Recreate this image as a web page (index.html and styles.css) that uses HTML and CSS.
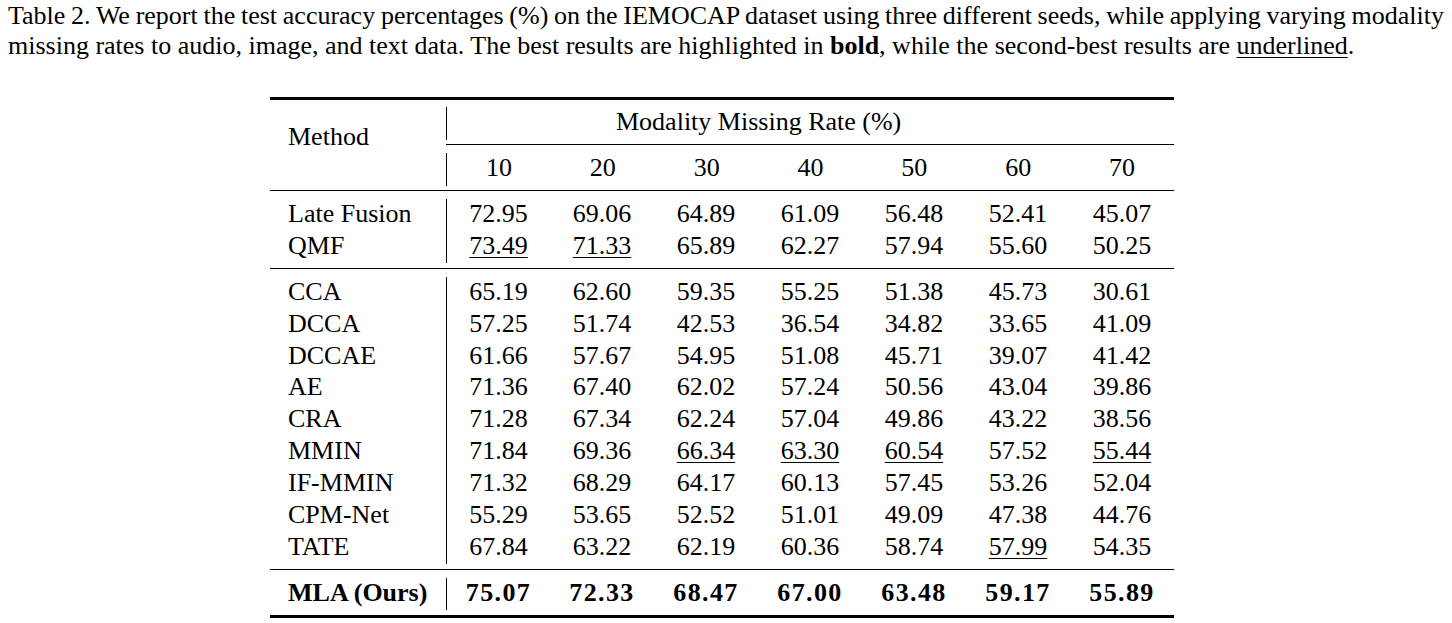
FILE: index.html
```html
<!DOCTYPE html>
<html lang="en">
<head>
<meta charset="utf-8">
<title>Table 2</title>
<link rel="stylesheet" href="styles.css">
</head>
<body>
<p class="caption"><span class="cap-line1">Table 2. We report the test accuracy percentages (%) on the IEMOCAP dataset using three different seeds, while applying varying modality</span><span class="cap-line2">missing rates to audio, image, and text data. The best results are highlighted in <b>bold</b>, while the second-best results are <u class="ul">underlined</u>.</span></p>

<div class="table">
  <div class="head">
    <div class="head-method">Method</div>
    <div class="head-right">
      <div class="span-row">Modality Missing Rate (%)</div>
      <div class="cmid"></div>
      <div class="rates">
        <span>10</span><span>20</span><span>30</span><span>40</span><span>50</span><span>60</span><span>70</span>
      </div>
    </div>
  </div>

  <div class="group">
    <span class="m">Late Fusion</span><span class="n c1">72.95</span><span class="n">69.06</span><span class="n">64.89</span><span class="n">61.09</span><span class="n">56.48</span><span class="n">52.41</span><span class="n">45.07</span>
    <span class="m">QMF</span><span class="n c1"><u class="ul">73.49</u></span><span class="n"><u class="ul">71.33</u></span><span class="n">65.89</span><span class="n">62.27</span><span class="n">57.94</span><span class="n">55.60</span><span class="n">50.25</span>
  </div>

  <div class="group">
    <span class="m">CCA</span><span class="n c1">65.19</span><span class="n">62.60</span><span class="n">59.35</span><span class="n">55.25</span><span class="n">51.38</span><span class="n">45.73</span><span class="n">30.61</span>
    <span class="m">DCCA</span><span class="n c1">57.25</span><span class="n">51.74</span><span class="n">42.53</span><span class="n">36.54</span><span class="n">34.82</span><span class="n">33.65</span><span class="n">41.09</span>
    <span class="m">DCCAE</span><span class="n c1">61.66</span><span class="n">57.67</span><span class="n">54.95</span><span class="n">51.08</span><span class="n">45.71</span><span class="n">39.07</span><span class="n">41.42</span>
    <span class="m">AE</span><span class="n c1">71.36</span><span class="n">67.40</span><span class="n">62.02</span><span class="n">57.24</span><span class="n">50.56</span><span class="n">43.04</span><span class="n">39.86</span>
    <span class="m">CRA</span><span class="n c1">71.28</span><span class="n">67.34</span><span class="n">62.24</span><span class="n">57.04</span><span class="n">49.86</span><span class="n">43.22</span><span class="n">38.56</span>
    <span class="m">MMIN</span><span class="n c1">71.84</span><span class="n">69.36</span><span class="n"><u class="ul">66.34</u></span><span class="n"><u class="ul">63.30</u></span><span class="n"><u class="ul">60.54</u></span><span class="n">57.52</span><span class="n"><u class="ul">55.44</u></span>
    <span class="m">IF-MMIN</span><span class="n c1">71.32</span><span class="n">68.29</span><span class="n">64.17</span><span class="n">60.13</span><span class="n">57.45</span><span class="n">53.26</span><span class="n">52.04</span>
    <span class="m">CPM-Net</span><span class="n c1">55.29</span><span class="n">53.65</span><span class="n">52.52</span><span class="n">51.01</span><span class="n">49.09</span><span class="n">47.38</span><span class="n">44.76</span>
    <span class="m">TATE</span><span class="n c1">67.84</span><span class="n">63.22</span><span class="n">62.19</span><span class="n">60.36</span><span class="n">58.74</span><span class="n"><u class="ul">57.99</u></span><span class="n">54.35</span>
  </div>

  <div class="group group-last best">
    <span class="m">MLA (Ours)</span><span class="n c1">75.07</span><span class="n">72.33</span><span class="n">68.47</span><span class="n">67.00</span><span class="n">63.48</span><span class="n">59.17</span><span class="n">55.89</span>
  </div>
</div>
</body>
</html>
```

FILE: styles.css
```css
body {
  margin: 0;
  background: #fff;
  color: #000;
  font-family: "Liberation Serif", "Times New Roman", serif;
}

.caption {
  margin: 1px 0 0 8px;
  width: 1436px;
  font-size: 26px;
  line-height: 30px;
}

.cap-line1 {
  display: block;
  word-spacing: -4px;
  text-align: justify;
  text-align-last: justify;
}

.cap-line2 {
  display: block;
}

.ul {
  text-decoration: underline;
  text-decoration-thickness: 1px;
  text-underline-offset: 3px;
}

.table {
  margin: 36px 0 0 270px;
  width: 904px;
  border-top: 3px solid #000;
  border-bottom: 3px solid #000;
  font-size: 26px;
}

.head {
  display: flex;
  border-bottom: 1px solid #000;
}

.head-method {
  width: 176px;
  flex: none;
  box-sizing: border-box;
  padding: 20px 0 0 18px;
  line-height: 33px;
}

.head-right {
  flex: 1;
  display: flex;
  flex-direction: column;
}

.span-row {
  margin: 7px 0 4px;
  height: 33px;
  box-sizing: border-box;
  line-height: 30px;
  padding: 0 0 3px 169px;
  border-left: 1px solid #000;
}

.cmid {
  border-top: 1px solid #000;
}

.rates {
  margin: 8px 0 4px;
  height: 33px;
  box-sizing: border-box;
  line-height: 30px;
  padding-bottom: 3px;
  border-left: 1px solid #000;
  display: grid;
  grid-template-columns: repeat(7, 1fr);
  text-align: center;
}

.group {
  display: grid;
  grid-template-columns: 176px repeat(7, 1fr);
  padding: 8px 0 5px;
  border-bottom: 1px solid #000;
}

.group-last {
  border-bottom: none;
}

.group > span {
  line-height: 29px;
  padding-bottom: 2.9px;
}

.m {
  padding-left: 18px;
}

.n {
  text-align: center;
}

.c1 {
  border-left: 1px solid #000;
}

.best {
  font-weight: bold;
}

.best .n {
  letter-spacing: 1.4px;
}
```
